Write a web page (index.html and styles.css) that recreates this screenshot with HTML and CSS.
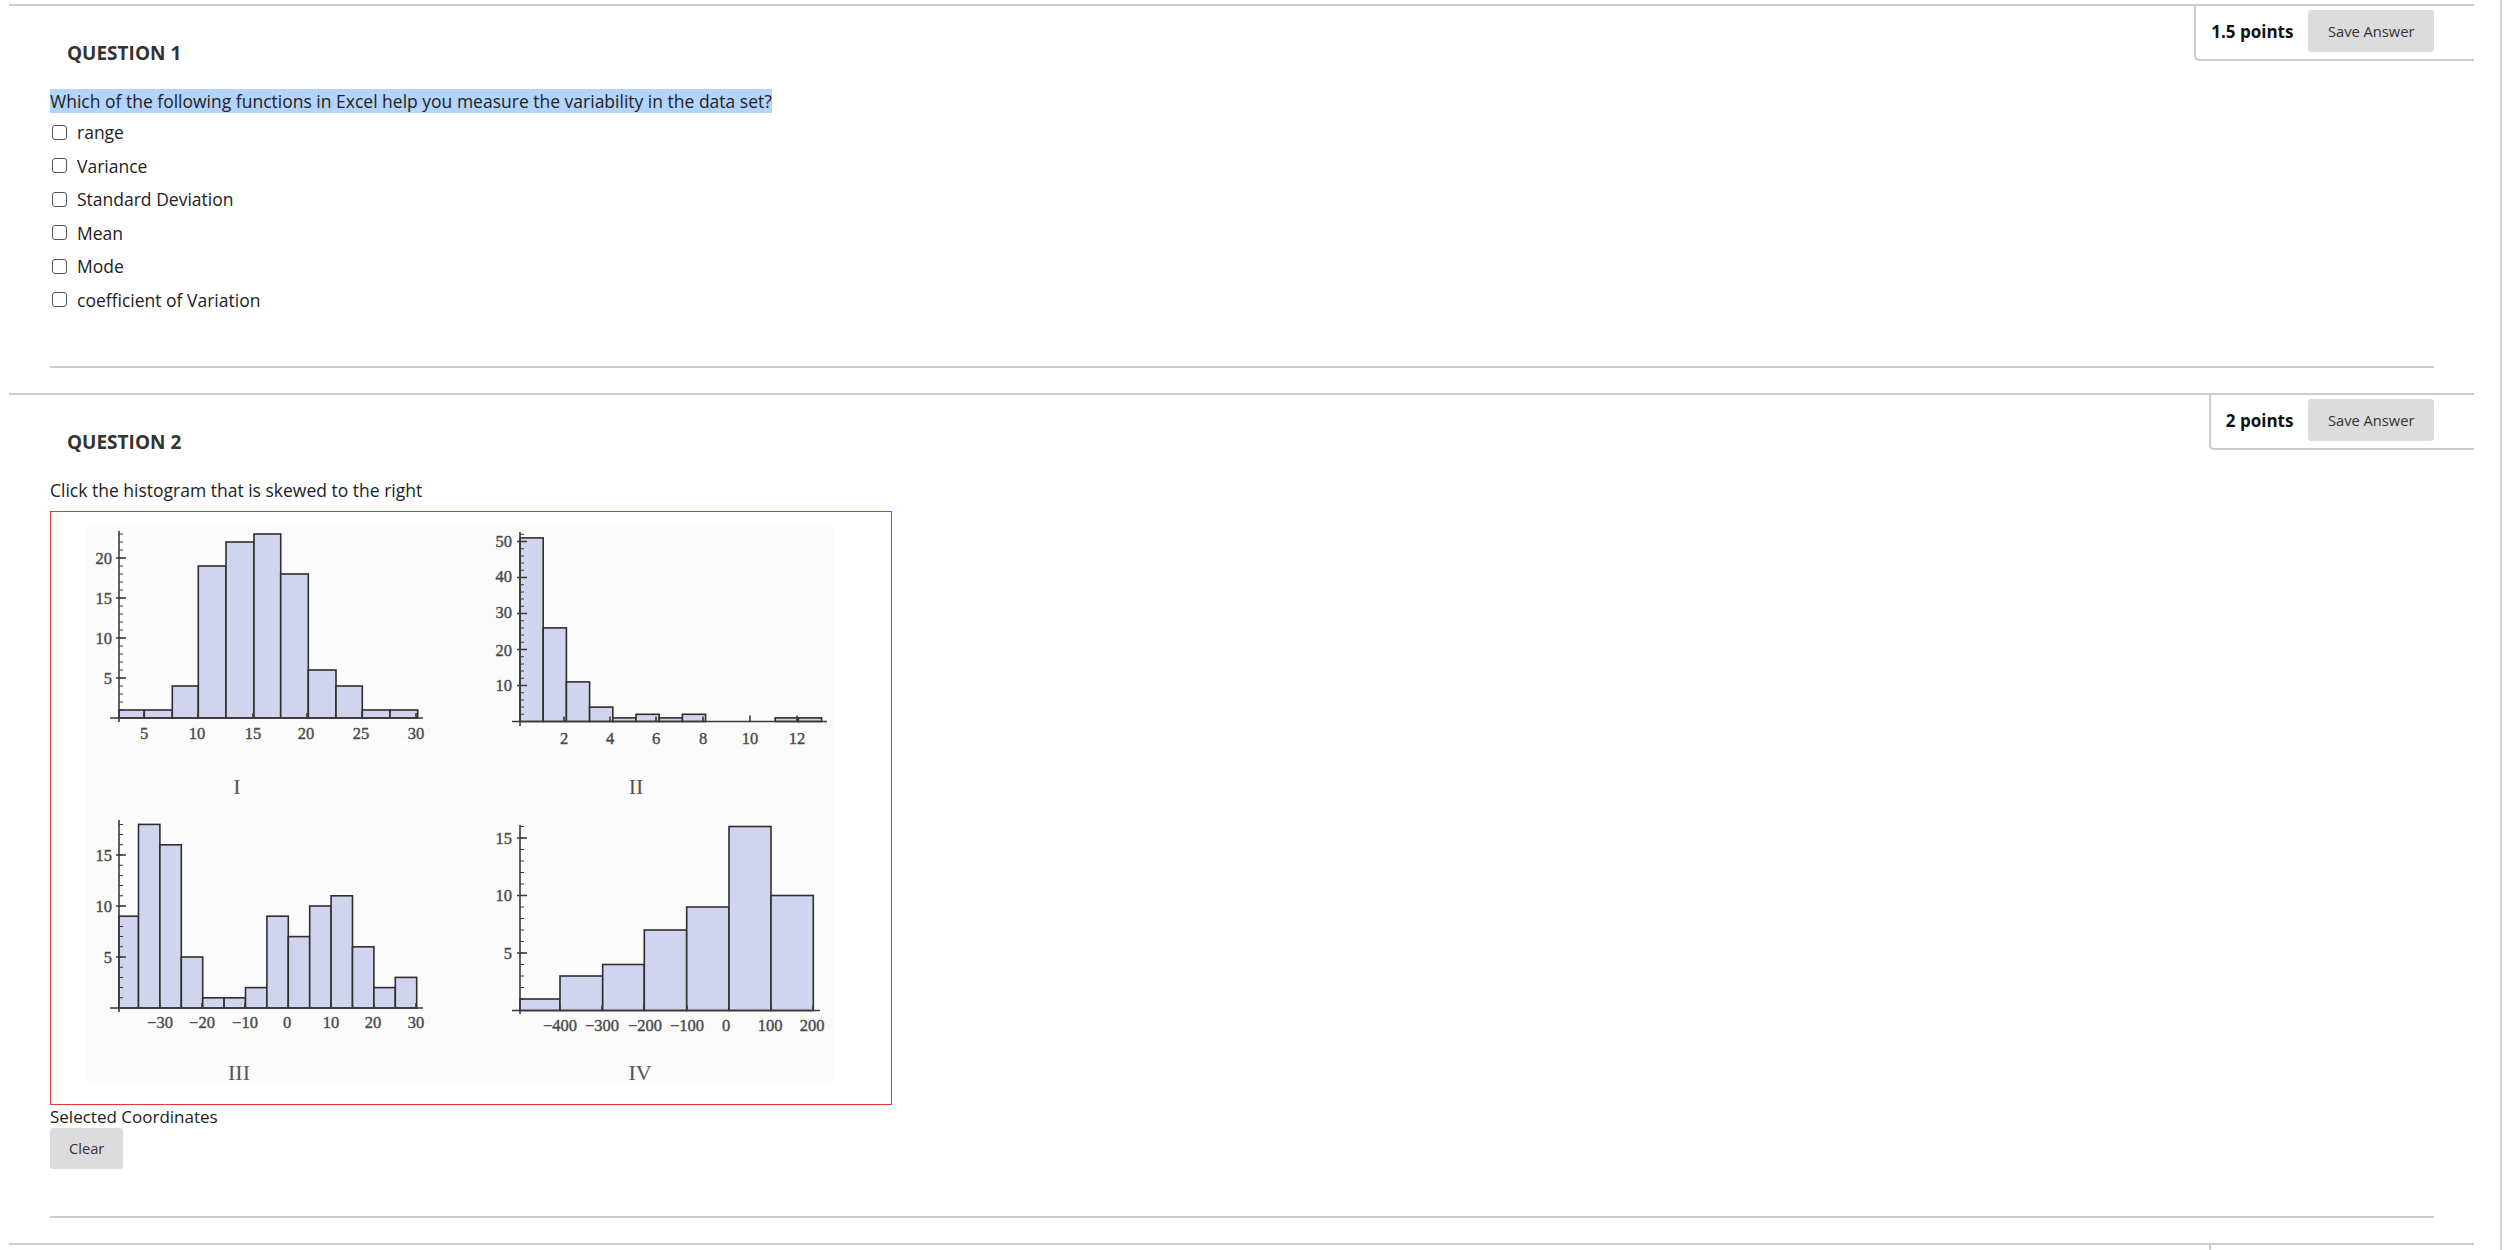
FILE: index.html
```html
<!DOCTYPE html>
<html lang="en">
<head>
  <meta charset="UTF-8">
  <meta name="viewport" content="width=device-width, initial-scale=1.0">
  <title>Take Test</title>
  <link rel="stylesheet" href="styles.css">
</head>
<body>
  <div class="page">

    <div class="question">
      <div class="question-head">
        <h3 class="q-title">QUESTION 1</h3>
        <div class="points-box">
          <span class="points">1.5 points</span>
          <button class="btn">Save Answer</button>
        </div>
      </div>
      <div class="q-body q1">
        <div class="q-text"><span class="selected">Which of the following functions in Excel help you measure the variability in the data set?</span></div>
        <ul class="options">
          <li><span class="check"></span>range</li>
          <li><span class="check"></span>Variance</li>
          <li><span class="check"></span>Standard Deviation</li>
          <li><span class="check"></span>Mean</li>
          <li><span class="check"></span>Mode</li>
          <li><span class="check"></span>coefficient of Variation</li>
        </ul>
      </div>
    </div>

    <div class="question">
      <div class="question-head">
        <h3 class="q-title">QUESTION 2</h3>
        <div class="points-box">
          <span class="points">2 points</span>
          <button class="btn">Save Answer</button>
        </div>
      </div>
      <div class="q-body q2">
        <div class="q-text">Click the histogram that is skewed to the right</div>
        <div class="hotspot">
          <svg width="840" height="592" viewBox="51 512 840 592">
            <rect class="img-bg" x="87" y="525" width="746" height="558"/>

            <!-- I -->
            <g class="bars">
              <rect x="119" y="710" width="25.3" height="8"/>
              <rect x="144.3" y="710" width="28" height="8"/>
              <rect x="172.3" y="686" width="26" height="32"/>
              <rect x="198.3" y="566" width="27.7" height="152"/>
              <rect x="226" y="542" width="28" height="176"/>
              <rect x="254" y="534" width="26.7" height="184"/>
              <rect x="280.7" y="574" width="27.6" height="144"/>
              <rect x="308.3" y="670" width="27.7" height="48"/>
              <rect x="336" y="686" width="26.3" height="32"/>
              <rect x="362.3" y="710" width="27.7" height="8"/>
              <rect x="390" y="710" width="27.7" height="8"/>
            </g>
            <line class="minor" x1="121" y1="718.5" x2="121" y2="531" stroke-dasharray="1 7"/>
            <path class="axis" d="M119 531V722M110 718H423M116 678h10M116 638h10M116 598h10M116 558h10M144 718v-5M198 718v-5M253 718v-5M307 718v-5M362 718v-5M416 718v-5"/>
            <g class="tick y-lab">
              <text x="112" y="563.5">20</text>
              <text x="112" y="603.5">15</text>
              <text x="112" y="643.5">10</text>
              <text x="112" y="683.5">5</text>
            </g>
            <g class="tick x-lab">
              <text x="144" y="738.5">5</text>
              <text x="197" y="738.5">10</text>
              <text x="253" y="738.5">15</text>
              <text x="306" y="738.5">20</text>
              <text x="361" y="738.5">25</text>
              <text x="416" y="738.5">30</text>
            </g>
            <text class="roman" x="237" y="793.5">I</text>

            <!-- II -->
            <g class="bars">
              <rect x="520" y="537.9" width="23.2" height="183.6"/>
              <rect x="543.2" y="627.9" width="23.2" height="93.6"/>
              <rect x="566.4" y="681.9" width="23.2" height="39.6"/>
              <rect x="589.6" y="707.1" width="23.2" height="14.4"/>
              <rect x="612.8" y="717.9" width="23.2" height="3.6"/>
              <rect x="636" y="714.3" width="23.2" height="7.2"/>
              <rect x="659.2" y="717.9" width="23.2" height="3.6"/>
              <rect x="682.4" y="714.3" width="23.2" height="7.2"/>
              <rect x="775.2" y="717.9" width="23.2" height="3.6"/>
              <rect x="798.4" y="717.9" width="23.2" height="3.6"/>
            </g>
            <line class="minor" x1="522" y1="722" x2="522" y2="532" stroke-dasharray="1 6.2"/>
            <path class="axis" d="M520 532V726M512 721.5H827M517 685.5h10M517 649.5h10M517 613.5h10M517 577.5h10M517 541.5h10M564 721.5v-5M610 721.5v-5M656 721.5v-5M703 721.5v-5M750 721.5v-6M797 721.5v-6"/>
            <g class="tick y-lab">
              <text x="512" y="547">50</text>
              <text x="512" y="582">40</text>
              <text x="512" y="617.5">30</text>
              <text x="512" y="655.5">20</text>
              <text x="512" y="690.5">10</text>
            </g>
            <g class="tick x-lab">
              <text x="564" y="743.5">2</text>
              <text x="610" y="743.5">4</text>
              <text x="656" y="743.5">6</text>
              <text x="703" y="743.5">8</text>
              <text x="750" y="743.5">10</text>
              <text x="797" y="743.5">12</text>
            </g>
            <text class="roman" x="636" y="793.5">II</text>

            <!-- III -->
            <g class="bars">
              <rect x="119" y="916.2" width="19.5" height="91.8"/>
              <rect x="138.5" y="824.4" width="21.4" height="183.6"/>
              <rect x="159.9" y="844.8" width="21.4" height="163.2"/>
              <rect x="181.3" y="957" width="21.4" height="51"/>
              <rect x="202.7" y="997.8" width="21.4" height="10.2"/>
              <rect x="224.1" y="997.8" width="21.4" height="10.2"/>
              <rect x="245.5" y="987.6" width="21.4" height="20.4"/>
              <rect x="266.9" y="916.2" width="21.4" height="91.8"/>
              <rect x="288.3" y="936.6" width="21.4" height="71.4"/>
              <rect x="309.7" y="906" width="21.4" height="102"/>
              <rect x="331.1" y="895.8" width="21.4" height="112.2"/>
              <rect x="352.5" y="946.8" width="21.4" height="61.2"/>
              <rect x="373.9" y="987.6" width="21.4" height="20.4"/>
              <rect x="395.3" y="977.4" width="21.4" height="30.6"/>
            </g>
            <line class="minor" x1="121" y1="1008.5" x2="121" y2="820" stroke-dasharray="1 9.2"/>
            <path class="axis" d="M119 820V1012M110 1008H423M116 957h10M116 906h10M116 855h10M160 1008v-5M202 1008v-5M245 1008v-5M288 1008v-5M331 1008v-5M374 1008v-5M416 1008v-5"/>
            <g class="tick y-lab">
              <text x="112" y="860.5">15</text>
              <text x="112" y="911.5">10</text>
              <text x="112" y="962.5">5</text>
            </g>
            <g class="tick x-lab">
              <text x="160" y="1028">−30</text>
              <text x="202" y="1028">−20</text>
              <text x="245" y="1028">−10</text>
              <text x="287" y="1028">0</text>
              <text x="331" y="1028">10</text>
              <text x="373" y="1028">20</text>
              <text x="416" y="1028">30</text>
            </g>
            <text class="roman" x="239" y="1079.5">III</text>

            <!-- IV -->
            <g class="bars">
              <rect x="520" y="999" width="40" height="11.5"/>
              <rect x="560" y="976" width="42.7" height="34.5"/>
              <rect x="602.7" y="964.5" width="41.6" height="46"/>
              <rect x="644.3" y="930" width="42.4" height="80.5"/>
              <rect x="686.7" y="907" width="42.3" height="103.5"/>
              <rect x="729" y="826.5" width="42" height="184"/>
              <rect x="771" y="895.5" width="42.3" height="115"/>
            </g>
            <line class="minor" x1="522" y1="1011" x2="522" y2="825" stroke-dasharray="1 10.5"/>
            <path class="axis" d="M520 825V1014M512 1010.5H820M517 953h10M517 895.5h10M517 838h10M560 1010.5v-5M602 1010.5v-5M644 1010.5v-5M687 1010.5v-5M729 1010.5v-5M771 1010.5v-5M813 1010.5v-5"/>
            <g class="tick y-lab">
              <text x="512" y="843.8">15</text>
              <text x="512" y="901.2">10</text>
              <text x="512" y="958.8">5</text>
            </g>
            <g class="tick x-lab">
              <text x="560" y="1030.5">−400</text>
              <text x="602" y="1030.5">−300</text>
              <text x="645" y="1030.5">−200</text>
              <text x="687" y="1030.5">−100</text>
              <text x="726" y="1030.5">0</text>
              <text x="770" y="1030.5">100</text>
              <text x="812" y="1030.5">200</text>
            </g>
            <text class="roman" x="640" y="1079.5">IV</text>
          </svg>
        </div>
        <div class="coords">Selected Coordinates</div>
        <button class="btn btn-clear">Clear</button>
      </div>
    </div>

    <!-- next question starts below the fold -->
    <div class="question">
      <div class="question-head">
        <span></span>
        <div class="points-box next-box"></div>
      </div>
    </div>

  </div>
  <div class="rail"></div>
</body>
</html>
```

FILE: styles.css
```css
body {
  margin: 0;
  display: flex;
  min-height: 100vh;
  background: #fff;
  color: #222;
  font-family: "Open Sans", "Noto Sans", sans-serif;
  overflow: hidden;
}

.page {
  flex: none;
  width: 2465px;
  margin-left: 9px;
  padding-top: 4px;
}

.rail {
  flex: none;
  width: 2px;
  margin-left: 26px;
  background: #d4d4d4;
}

.question {
  border-top: 2px solid #ccc;
}

.question-head {
  display: flex;
  justify-content: space-between;
  align-items: flex-start;
}

.q-title {
  margin: 34px 0 0 58px;
  font-size: 19px;
  font-weight: 700;
  line-height: 26px;
  color: #333;
}

.points-box {
  display: flex;
  align-items: center;
  gap: 15px;
  padding: 4px 40px 7px 15px;
  border-left: 2px solid #ccc;
  border-bottom: 2px solid #ccc;
  border-bottom-left-radius: 5px;
}

.next-box {
  box-sizing: border-box;
  width: 265px;
  height: 55px;
}

.points {
  font-size: 17px;
  font-weight: 700;
  color: #111;
}

.btn {
  height: 42px;
  padding: 0 19.5px;
  border: 0;
  border-radius: 3px;
  background: #dcdcdc;
  color: #333;
  font-family: inherit;
  font-size: 14.7px;
}

.q-body {
  margin: 0 40px 25px 41px;
  border-bottom: 2px solid #ccc;
}

.q-text {
  margin-top: 24px;
  font-size: 17.5px;
  line-height: 23.4px;
}

.selected {
  background: #b3d4fc;
}

.options {
  list-style: none;
  margin: 7px 0 0;
  padding: 0 0 55px;
}

.options li {
  display: flex;
  align-items: center;
  gap: 10px;
  height: 23.4px;
  margin-bottom: 10.1px;
  font-size: 17.5px;
}

.options li:last-child {
  margin-bottom: 0;
}

.check {
  box-sizing: border-box;
  width: 15px;
  height: 15px;
  margin-left: 2px;
  border: 1.5px solid #555;
  border-radius: 3px;
  background: #fff;
}

.q2 {
  padding-bottom: 47px;
}

.hotspot {
  width: 840px;
  margin-top: 8px;
  border: 1px solid #e53b2f;
}

.hotspot svg {
  display: block;
}

.img-bg {
  fill: #fbfbfb;
}

.bars rect {
  fill: #d0d4ee;
  stroke: #2e2e2e;
  stroke-width: 1.6;
}

.axis {
  fill: none;
  stroke: #3a3a3a;
  stroke-width: 1.6;
}

.minor {
  stroke: #3a3a3a;
  stroke-width: 4;
}

.tick {
  font-family: "Liberation Serif", serif;
  font-size: 16.5px;
  fill: #4a4a4a;
  stroke: #4a4a4a;
  stroke-width: 0.4;
}

.y-lab {
  text-anchor: end;
}

.x-lab {
  text-anchor: middle;
}

.roman {
  font-family: "Liberation Serif", serif;
  font-size: 22px;
  fill: #555;
  text-anchor: middle;
}

.coords {
  font-size: 17px;
  line-height: 23px;
}

.btn-clear {
  display: block;
  height: 41px;
  padding: 0 19px;
}
```
